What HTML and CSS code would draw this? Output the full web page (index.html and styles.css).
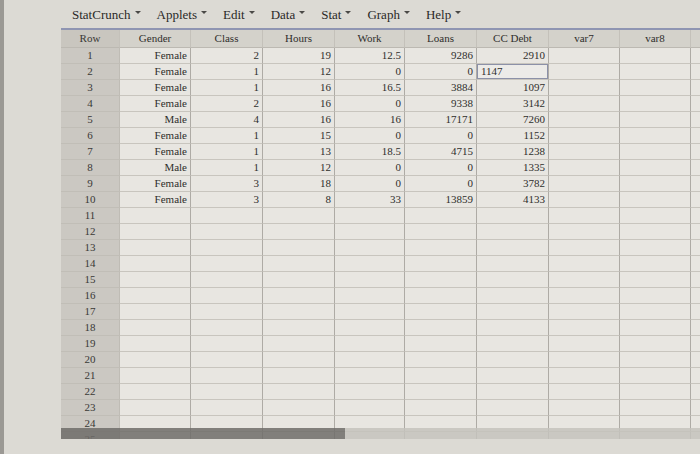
FILE: index.html
```html
<!DOCTYPE html>
<html>
<head>
<meta charset="utf-8">
<title>StatCrunch</title>
<link rel="stylesheet" href="styles.css">
</head>
<body>
<div class="edge"></div>
<div class="app">
  <div class="menubar">
    <div class="menu">StatCrunch<span class="caret"></span></div>
    <div class="menu">Applets<span class="caret"></span></div>
    <div class="menu">Edit<span class="caret"></span></div>
    <div class="menu">Data<span class="caret"></span></div>
    <div class="menu">Stat<span class="caret"></span></div>
    <div class="menu">Graph<span class="caret"></span></div>
    <div class="menu">Help<span class="caret"></span></div>
  </div>
  <div class="sheetwrap">
    <div class="sheet">
      <div class="row head"><div class="c rn">Row</div><div class="c">Gender</div><div class="c">Class</div><div class="c">Hours</div><div class="c">Work</div><div class="c">Loans</div><div class="c">CC Debt</div><div class="c">var7</div><div class="c">var8</div><div class="c"></div></div>
      <div class="row"><div class="c rn">1</div><div class="c">Female</div><div class="c">2</div><div class="c">19</div><div class="c">12.5</div><div class="c">9286</div><div class="c">2910</div><div class="c"></div><div class="c"></div><div class="c"></div></div>
      <div class="row"><div class="c rn">2</div><div class="c">Female</div><div class="c">1</div><div class="c">12</div><div class="c">0</div><div class="c">0</div><div class="c edit">1147</div><div class="c"></div><div class="c"></div><div class="c"></div></div>
      <div class="row"><div class="c rn">3</div><div class="c">Female</div><div class="c">1</div><div class="c">16</div><div class="c">16.5</div><div class="c">3884</div><div class="c">1097</div><div class="c"></div><div class="c"></div><div class="c"></div></div>
      <div class="row"><div class="c rn">4</div><div class="c">Female</div><div class="c">2</div><div class="c">16</div><div class="c">0</div><div class="c">9338</div><div class="c">3142</div><div class="c"></div><div class="c"></div><div class="c"></div></div>
      <div class="row"><div class="c rn">5</div><div class="c">Male</div><div class="c">4</div><div class="c">16</div><div class="c">16</div><div class="c">17171</div><div class="c">7260</div><div class="c"></div><div class="c"></div><div class="c"></div></div>
      <div class="row"><div class="c rn">6</div><div class="c">Female</div><div class="c">1</div><div class="c">15</div><div class="c">0</div><div class="c">0</div><div class="c">1152</div><div class="c"></div><div class="c"></div><div class="c"></div></div>
      <div class="row"><div class="c rn">7</div><div class="c">Female</div><div class="c">1</div><div class="c">13</div><div class="c">18.5</div><div class="c">4715</div><div class="c">1238</div><div class="c"></div><div class="c"></div><div class="c"></div></div>
      <div class="row"><div class="c rn">8</div><div class="c">Male</div><div class="c">1</div><div class="c">12</div><div class="c">0</div><div class="c">0</div><div class="c">1335</div><div class="c"></div><div class="c"></div><div class="c"></div></div>
      <div class="row"><div class="c rn">9</div><div class="c">Female</div><div class="c">3</div><div class="c">18</div><div class="c">0</div><div class="c">0</div><div class="c">3782</div><div class="c"></div><div class="c"></div><div class="c"></div></div>
      <div class="row"><div class="c rn">10</div><div class="c">Female</div><div class="c">3</div><div class="c">8</div><div class="c">33</div><div class="c">13859</div><div class="c">4133</div><div class="c"></div><div class="c"></div><div class="c"></div></div>
      <div class="row"><div class="c rn">11</div><div class="c"></div><div class="c"></div><div class="c"></div><div class="c"></div><div class="c"></div><div class="c"></div><div class="c"></div><div class="c"></div><div class="c"></div></div>
      <div class="row"><div class="c rn">12</div><div class="c"></div><div class="c"></div><div class="c"></div><div class="c"></div><div class="c"></div><div class="c"></div><div class="c"></div><div class="c"></div><div class="c"></div></div>
      <div class="row"><div class="c rn">13</div><div class="c"></div><div class="c"></div><div class="c"></div><div class="c"></div><div class="c"></div><div class="c"></div><div class="c"></div><div class="c"></div><div class="c"></div></div>
      <div class="row"><div class="c rn">14</div><div class="c"></div><div class="c"></div><div class="c"></div><div class="c"></div><div class="c"></div><div class="c"></div><div class="c"></div><div class="c"></div><div class="c"></div></div>
      <div class="row"><div class="c rn">15</div><div class="c"></div><div class="c"></div><div class="c"></div><div class="c"></div><div class="c"></div><div class="c"></div><div class="c"></div><div class="c"></div><div class="c"></div></div>
      <div class="row"><div class="c rn">16</div><div class="c"></div><div class="c"></div><div class="c"></div><div class="c"></div><div class="c"></div><div class="c"></div><div class="c"></div><div class="c"></div><div class="c"></div></div>
      <div class="row"><div class="c rn">17</div><div class="c"></div><div class="c"></div><div class="c"></div><div class="c"></div><div class="c"></div><div class="c"></div><div class="c"></div><div class="c"></div><div class="c"></div></div>
      <div class="row"><div class="c rn">18</div><div class="c"></div><div class="c"></div><div class="c"></div><div class="c"></div><div class="c"></div><div class="c"></div><div class="c"></div><div class="c"></div><div class="c"></div></div>
      <div class="row"><div class="c rn">19</div><div class="c"></div><div class="c"></div><div class="c"></div><div class="c"></div><div class="c"></div><div class="c"></div><div class="c"></div><div class="c"></div><div class="c"></div></div>
      <div class="row"><div class="c rn">20</div><div class="c"></div><div class="c"></div><div class="c"></div><div class="c"></div><div class="c"></div><div class="c"></div><div class="c"></div><div class="c"></div><div class="c"></div></div>
      <div class="row"><div class="c rn">21</div><div class="c"></div><div class="c"></div><div class="c"></div><div class="c"></div><div class="c"></div><div class="c"></div><div class="c"></div><div class="c"></div><div class="c"></div></div>
      <div class="row"><div class="c rn">22</div><div class="c"></div><div class="c"></div><div class="c"></div><div class="c"></div><div class="c"></div><div class="c"></div><div class="c"></div><div class="c"></div><div class="c"></div></div>
      <div class="row"><div class="c rn">23</div><div class="c"></div><div class="c"></div><div class="c"></div><div class="c"></div><div class="c"></div><div class="c"></div><div class="c"></div><div class="c"></div><div class="c"></div></div>
      <div class="row"><div class="c rn">24</div><div class="c"></div><div class="c"></div><div class="c"></div><div class="c"></div><div class="c"></div><div class="c"></div><div class="c"></div><div class="c"></div><div class="c"></div></div>
      <div class="row"><div class="c rn">25</div><div class="c"></div><div class="c"></div><div class="c"></div><div class="c"></div><div class="c"></div><div class="c"></div><div class="c"></div><div class="c"></div><div class="c"></div></div>
    </div>
    <div class="scrollbar"><div class="thumb"></div><div class="track"></div></div>
  </div>
</div>
</body>
</html>
```
FILE: styles.css
```css
* { box-sizing: border-box; }
html, body { margin: 0; padding: 0; }
body {
  width: 700px;
  height: 454px;
  overflow: hidden;
  display: flex;
  background: #dcdad4;
  font-family: "Liberation Serif", "Times New Roman", serif;
  color: #2f2e2c;
}
.edge {
  width: 4px;
  flex: none;
  background: #9b9994;
}
.app {
  flex: 1;
  min-width: 0;
  display: flex;
  flex-direction: column;
}
.menubar {
  height: 28px;
  flex: none;
  display: flex;
  align-items: center;
  padding-left: 68px;
  padding-top: 2px;
  font-size: 13px;
  color: #2a2927;
}
.menu {
  display: flex;
  align-items: center;
  margin-right: 16px;
}
.caret {
  width: 0;
  height: 0;
  border-left: 3px solid transparent;
  border-right: 3px solid transparent;
  border-top: 3px solid #4a4946;
  margin-left: 4px;
  margin-top: -5px;
}
.sheetwrap {
  position: relative;
  height: 411px;
  flex: none;
}
.sheet {
  margin-left: 57px;
  height: 411px;
  overflow: hidden;
  border-top: 2px solid #8f95b2;
  width: 700px;
}
.row {
  display: grid;
  grid-template-columns: 59px 71px 72px 72px 70px 72px 72px 71px 71px 72px;
  height: 16px;
}
.c {
  background: #e8e6e1;
  border-right: 1px solid #aeaba5;
  border-bottom: 1px solid #c8c5be;
  font-size: 11px;
  line-height: 15px;
  text-align: right;
  padding-right: 3px;
  white-space: nowrap;
  overflow: hidden;
}
.c.rn {
  background: #cbc8c2;
  border-right: 1px solid #bfbcb5;
  border-bottom-color: #c1beb7;
  text-align: center;
  padding: 0;
  color: #3a3936;
}
.head { height: 18px; }
.head .c {
  background: #d4d2cb;
  text-align: center;
  padding: 0;
  line-height: 17px;
  border-right-color: #c4c1ba;
  border-bottom-color: #bcb9b2;
}
.head .c.rn { background: #c9c6bf; }
.c.edit {
  text-align: left;
  padding-left: 4px;
  background: #ecebe8;
  box-shadow: inset 0 0 0 1px #8c91a8;
}
.scrollbar {
  position: absolute;
  left: 57px;
  right: 0;
  bottom: 0;
  height: 11px;
  display: flex;
}
.thumb {
  width: 284px;
  background: rgba(110, 108, 104, 0.85);
}
.track {
  flex: 1;
  background: rgba(196, 194, 188, 0.85);
}
```
